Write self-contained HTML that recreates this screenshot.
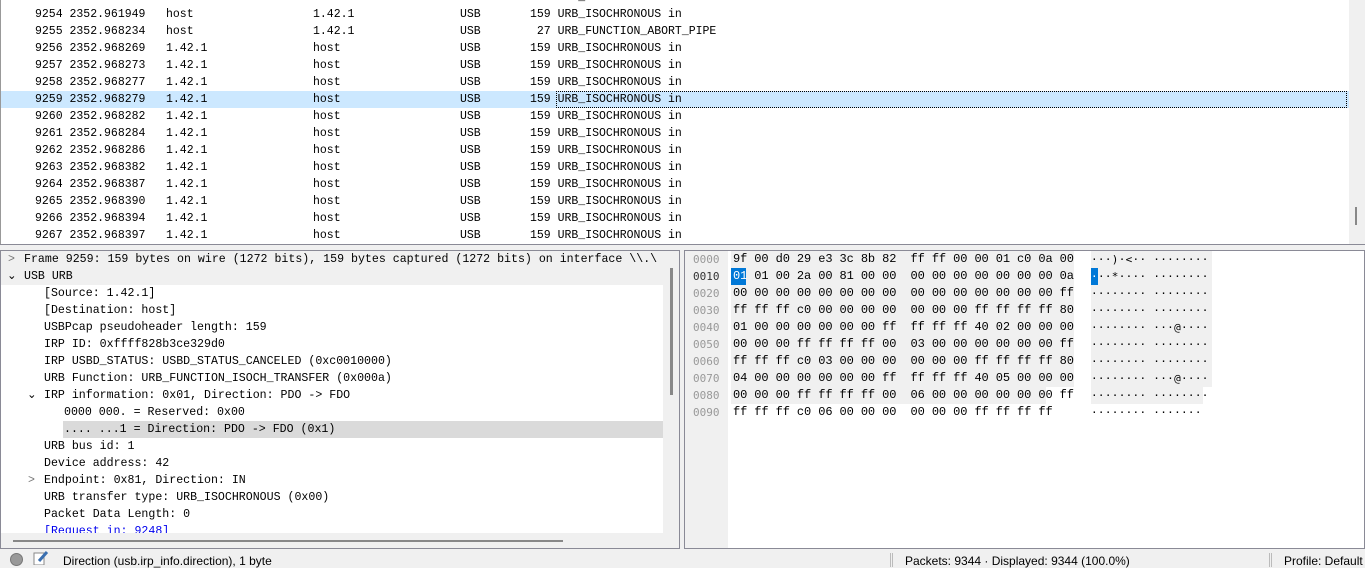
<!DOCTYPE html>
<html><head><meta charset="utf-8"><style>
*{margin:0;padding:0;box-sizing:border-box}
body{width:1365px;height:565px;overflow:hidden;background:#f0f0f0;position:relative;font-family:"Liberation Mono",monospace;color:#000}
.a{position:absolute;white-space:pre}
#list{position:absolute;left:0;top:0;width:1365px;height:244px;background:#fff;overflow:hidden;font-size:11.5px}
.r{position:absolute;left:0;width:1349px;height:17px;line-height:17px}
.r span{position:absolute;top:0;white-space:pre}
#det{position:absolute;left:0;top:250px;width:680px;height:299px;border:1px solid #8a8a96;background:#f0f0f0;overflow:hidden}
#detc{position:absolute;left:0;top:0;width:662px;height:282px;background:#fff;overflow:hidden;font-size:11.6px}
.d{position:absolute;left:0;width:662px;height:17px;line-height:17px}
#hex{position:absolute;left:684px;top:250px;width:681px;height:299px;border:1px solid #8a8a96;background:#fff;overflow:hidden;font-size:11px;font-family:"DejaVu Sans Mono","Liberation Mono",monospace}
.h{position:absolute;height:17px;line-height:17px}
#status{position:absolute;left:0;top:549px;width:1365px;height:16px;font-family:"Liberation Sans",sans-serif;font-size:12px;color:#000}
</style></head><body>
<div id="list">
<div class="r" style="top:-11px"><span style="left:35px">9253 2352.961940</span><span style="left:166px">1.42.1</span><span style="left:313px">host</span><span style="left:460px">USB</span><span style="left:530px">159 URB_ISOCHRONOUS in</span></div>
<div class="r" style="top:6px"><span style="left:35px">9254 2352.961949</span><span style="left:166px">host</span><span style="left:313px">1.42.1</span><span style="left:460px">USB</span><span style="left:530px">159 URB_ISOCHRONOUS in</span></div>
<div class="r" style="top:23px"><span style="left:35px">9255 2352.968234</span><span style="left:166px">host</span><span style="left:313px">1.42.1</span><span style="left:460px">USB</span><span style="left:530px"> 27 URB_FUNCTION_ABORT_PIPE</span></div>
<div class="r" style="top:40px"><span style="left:35px">9256 2352.968269</span><span style="left:166px">1.42.1</span><span style="left:313px">host</span><span style="left:460px">USB</span><span style="left:530px">159 URB_ISOCHRONOUS in</span></div>
<div class="r" style="top:57px"><span style="left:35px">9257 2352.968273</span><span style="left:166px">1.42.1</span><span style="left:313px">host</span><span style="left:460px">USB</span><span style="left:530px">159 URB_ISOCHRONOUS in</span></div>
<div class="r" style="top:74px"><span style="left:35px">9258 2352.968277</span><span style="left:166px">1.42.1</span><span style="left:313px">host</span><span style="left:460px">USB</span><span style="left:530px">159 URB_ISOCHRONOUS in</span></div>
<div class="r" style="top:91px;background:#cce8ff"><div style="position:absolute;left:556px;top:0;width:791px;height:17px;border:1px dotted #000"></div><span style="left:35px">9259 2352.968279</span><span style="left:166px">1.42.1</span><span style="left:313px">host</span><span style="left:460px">USB</span><span style="left:530px">159 URB_ISOCHRONOUS in</span></div>
<div class="r" style="top:108px"><span style="left:35px">9260 2352.968282</span><span style="left:166px">1.42.1</span><span style="left:313px">host</span><span style="left:460px">USB</span><span style="left:530px">159 URB_ISOCHRONOUS in</span></div>
<div class="r" style="top:125px"><span style="left:35px">9261 2352.968284</span><span style="left:166px">1.42.1</span><span style="left:313px">host</span><span style="left:460px">USB</span><span style="left:530px">159 URB_ISOCHRONOUS in</span></div>
<div class="r" style="top:142px"><span style="left:35px">9262 2352.968286</span><span style="left:166px">1.42.1</span><span style="left:313px">host</span><span style="left:460px">USB</span><span style="left:530px">159 URB_ISOCHRONOUS in</span></div>
<div class="r" style="top:159px"><span style="left:35px">9263 2352.968382</span><span style="left:166px">1.42.1</span><span style="left:313px">host</span><span style="left:460px">USB</span><span style="left:530px">159 URB_ISOCHRONOUS in</span></div>
<div class="r" style="top:176px"><span style="left:35px">9264 2352.968387</span><span style="left:166px">1.42.1</span><span style="left:313px">host</span><span style="left:460px">USB</span><span style="left:530px">159 URB_ISOCHRONOUS in</span></div>
<div class="r" style="top:193px"><span style="left:35px">9265 2352.968390</span><span style="left:166px">1.42.1</span><span style="left:313px">host</span><span style="left:460px">USB</span><span style="left:530px">159 URB_ISOCHRONOUS in</span></div>
<div class="r" style="top:210px"><span style="left:35px">9266 2352.968394</span><span style="left:166px">1.42.1</span><span style="left:313px">host</span><span style="left:460px">USB</span><span style="left:530px">159 URB_ISOCHRONOUS in</span></div>
<div class="r" style="top:227px"><span style="left:35px">9267 2352.968397</span><span style="left:166px">1.42.1</span><span style="left:313px">host</span><span style="left:460px">USB</span><span style="left:530px">159 URB_ISOCHRONOUS in</span></div>
<div style="position:absolute;left:1349px;top:0;width:16px;height:244px;background:#f0f0f0"></div>
<div style="position:absolute;left:1355px;top:207px;width:2px;height:18px;background:#888"></div>
<div style="position:absolute;left:0;top:0;width:1px;height:244px;background:#999"></div>
</div>
<div style="position:absolute;left:0;top:244px;width:1365px;height:1px;background:#8a8a96"></div>
<div id="det">
<div id="detc">
<div class="d" style="top:0;background:#f0f0f0"><span class="a" style="left:7px;color:#777">&gt;</span><span class="a" style="left:23px">Frame 9259: 159 bytes on wire (1272 bits), 159 bytes captured (1272 bits) on interface \\.\</span></div>
<div class="d" style="top:17px;background:#f0f0f0"><span class="a" style="left:6px">&#8964;</span><span class="a" style="left:23px">USB URB</span></div>
<div class="d" style="top:34px"><span class="a" style="left:43px">[Source: 1.42.1]</span></div>
<div class="d" style="top:51px"><span class="a" style="left:43px">[Destination: host]</span></div>
<div class="d" style="top:68px"><span class="a" style="left:43px">USBPcap pseudoheader length: 159</span></div>
<div class="d" style="top:85px"><span class="a" style="left:43px">IRP ID: 0xffff828b3ce329d0</span></div>
<div class="d" style="top:102px"><span class="a" style="left:43px">IRP USBD_STATUS: USBD_STATUS_CANCELED (0xc0010000)</span></div>
<div class="d" style="top:119px"><span class="a" style="left:43px">URB Function: URB_FUNCTION_ISOCH_TRANSFER (0x000a)</span></div>
<div class="d" style="top:136px"><span class="a" style="left:26px">&#8964;</span><span class="a" style="left:43px">IRP information: 0x01, Direction: PDO -&gt; FDO</span></div>
<div class="d" style="top:153px"><span class="a" style="left:63px">0000 000. = Reserved: 0x00</span></div>
<div class="d" style="top:170px;background:#dadada;left:62px;width:600px"><span class="a" style="left:1px">.... ...1 = Direction: PDO -&gt; FDO (0x1)</span></div>
<div class="d" style="top:187px"><span class="a" style="left:43px">URB bus id: 1</span></div>
<div class="d" style="top:204px"><span class="a" style="left:43px">Device address: 42</span></div>
<div class="d" style="top:221px"><span class="a" style="left:27px;color:#777">&gt;</span><span class="a" style="left:43px">Endpoint: 0x81, Direction: IN</span></div>
<div class="d" style="top:238px"><span class="a" style="left:43px">URB transfer type: URB_ISOCHRONOUS (0x00)</span></div>
<div class="d" style="top:255px"><span class="a" style="left:43px">Packet Data Length: 0</span></div>
<div class="d" style="top:272px"><span class="a" style="left:43px;color:#0000ee">[Request in: 9248]</span></div>
</div>
<div style="position:absolute;left:669px;top:17px;width:3px;height:127px;background:#888"></div>
<div style="position:absolute;left:12px;top:289px;width:550px;height:2px;background:#888"></div>
</div>
<div id="hex">
<div style="position:absolute;left:0;top:0;width:43px;height:299px;background:#f0f0f0"></div>
<div style="position:absolute;left:46px;top:0;width:343px;height:136px;background:#f0f0f0"></div>
<div style="position:absolute;left:46px;top:136px;width:315px;height:17px;background:#f0f0f0"></div>
<div style="position:absolute;left:406px;top:0;width:121px;height:136px;background:#f0f0f0"></div>
<div style="position:absolute;left:406px;top:136px;width:112px;height:17px;background:#f0f0f0"></div>
<div style="position:absolute;left:46px;top:17px;width:15px;height:17px;background:#0078d7"></div>
<div style="position:absolute;left:406px;top:17px;width:7px;height:17px;background:#0078d7"></div>
<div class="h" style="left:8px;top:0;color:#999">0000<br><span style="color:#333">0010</span><br>0020<br>0030<br>0040<br>0050<br>0060<br>0070<br>0080<br>0090</div>
<div class="h a" style="left:48px;top:0;font-size:12px;font-family:'Liberation Mono',monospace;letter-spacing:-0.1px">9f 00 d0 29 e3 3c 8b 82  ff ff 00 00 01 c0 0a 00
<span style="color:#fff">01</span> 01 00 2a 00 81 00 00  00 00 00 00 00 00 00 0a
00 00 00 00 00 00 00 00  00 00 00 00 00 00 00 ff
ff ff ff c0 00 00 00 00  00 00 00 ff ff ff ff 80
01 00 00 00 00 00 00 ff  ff ff ff 40 02 00 00 00
00 00 00 ff ff ff ff 00  03 00 00 00 00 00 00 ff
ff ff ff c0 03 00 00 00  00 00 00 ff ff ff ff 80
04 00 00 00 00 00 00 ff  ff ff ff 40 05 00 00 00
00 00 00 ff ff ff ff 00  06 00 00 00 00 00 00 ff
ff ff ff c0 06 00 00 00  00 00 00 ff ff ff ff</div>
<div class="h a" style="left:406px;top:0;letter-spacing:0.3px">···)·<·· ········
<span style="color:#fff">·</span>··*···· ········
········ ········
········ ········
········ ···@····
········ ········
········ ········
········ ···@····
········ ········
········ ·······</div>
</div>
<div id="status">
<div style="position:absolute;left:10px;top:4px;width:13px;height:13px;border-radius:50%;background:#999;border:1px solid #777"></div>
<svg style="position:absolute;left:33px;top:2px" width="16" height="14"><rect x="1" y="2" width="10" height="12" fill="#fff" stroke="#888"/><path d="M6 10 L14 1" stroke="#3a6fb0" stroke-width="3"/></svg>
<span class="a" style="left:63px;top:5px">Direction (usb.irp_info.direction), 1 byte</span>
<div style="position:absolute;left:890px;top:4px;width:3px;height:14px;border-left:1px solid #bbb;border-right:1px solid #bbb"></div>
<span class="a" style="left:905px;top:5px">Packets: 9344 · Displayed: 9344 (100.0%)</span>
<div style="position:absolute;left:1269px;top:4px;width:3px;height:14px;border-left:1px solid #bbb;border-right:1px solid #bbb"></div>
<span class="a" style="left:1284px;top:5px">Profile: Default</span>
</div>
</body></html>
